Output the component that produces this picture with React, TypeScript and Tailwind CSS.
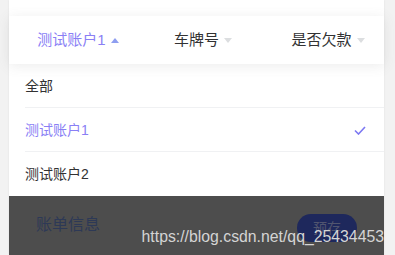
import React from 'react';

const font = { fontFamily: '"Liberation Sans", "Noto Sans CJK SC", sans-serif' };

const tabs = [
  { label: '测试账户1', active: true },
  { label: '车牌号', active: false },
  { label: '是否欠款', active: false },
];

const options = [
  { label: '全部', checked: false },
  { label: '测试账户1', checked: true },
  { label: '测试账户2', checked: false },
];

function Caret({ up, color }: { up?: boolean; color: string }) {
  return (
    <svg width="8" height="5" viewBox="0 0 8 5" className="absolute left-[calc(100%+5px)] top-[9px]">
      {up ? <path d="M0 5 L4 0 L8 5 Z" fill={color} /> : <path d="M0 0 L8 0 L4 5 Z" fill={color} />}
    </svg>
  );
}

export default function App() {
  return (
    <div className="relative h-[255px] w-[395px] overflow-hidden bg-[#f2f2f2]" style={font}>
      <div className="ml-[9px] flex h-full w-[375px] flex-col bg-white shadow-[0_0_2px_rgba(0,0,0,0.08)]">
        <div className="h-[16px]" />
        <div className="relative z-10 flex h-[48px] bg-white shadow-[0_2px_12px_rgba(100,101,102,0.12)]">
          {tabs.map((t) => (
            <div key={t.label} className="flex flex-1 items-center justify-center">
              <span
                className={`relative text-[15px] leading-[22px] ${t.active ? 'text-[#8a7ff5]' : 'text-[#323233]'}`}
              >
                {t.label}
                <Caret up={t.active} color={t.active ? '#8e9ef0' : '#dcdee0'} />
              </span>
            </div>
          ))}
        </div>
        <div className="bg-white">
          {options.map((o, i) => (
            <div key={o.label} className="relative flex h-[44px] items-center px-[16px]">
              <span className={`flex-1 text-[14px] leading-[24px] ${o.checked ? 'text-[#8a7ff5]' : 'text-[#323233]'}`}>
                {o.label}
              </span>
              {o.checked && (
                <svg width="12" height="9" viewBox="0 0 12 9" className="mr-[2px]">
                  <path d="M1 4.5 L4.5 8 L11 1" fill="none" stroke="#7c78f2" strokeWidth="1.6" />
                </svg>
              )}
              {i < options.length - 1 && (
                <div className="absolute bottom-0 left-[16px] right-0 h-px bg-[#f0f1f3]" />
              )}
            </div>
          ))}
        </div>
        <div className="flex flex-1 items-start bg-[#4d4d4d] pl-[27px] pr-[27px] pt-[18px]">
          <span className="flex-1 text-[16px] leading-[22px] text-[#2d3956]">账单信息</span>
          <div className="flex h-[28px] w-[60px] items-center justify-center rounded-full bg-[#1e285c] text-[14px] text-[#51556f]">
            预存
          </div>
        </div>
      </div>
      <div className="absolute right-[11px] top-[227px] text-[15.8px] leading-[20px] text-[#d4d4d4]">
        https://blog.csdn.net/qq_25434453
      </div>
    </div>
  );
}
